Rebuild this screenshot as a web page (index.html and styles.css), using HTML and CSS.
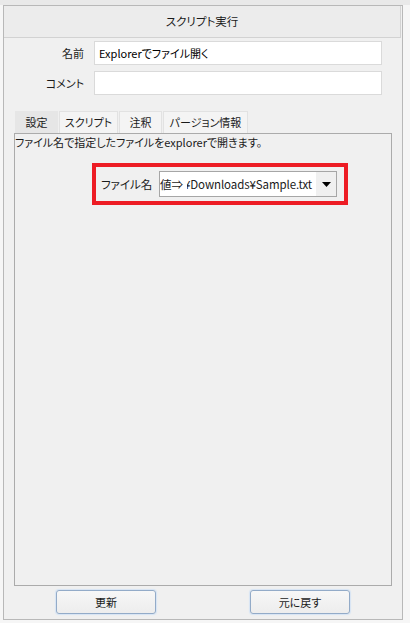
FILE: index.html
```html
<!DOCTYPE html>
<html lang="ja">
<head>
    <meta charset="UTF-8">
    <meta name="viewport" content="width=device-width, initial-scale=1.0">
    <title>スクリプト実行</title>
    <link rel="stylesheet" href="styles.css">
</head>
<body>
    <div class="window">
        <div class="title">スクリプト実行</div>

        <!-- 名前・コメント -->
        <div class="form">
            <label class="form-label">名前</label>
            <input class="form-input" type="text" value="Explorerでファイル開く">
            <label class="form-label">コメント</label>
            <input class="form-input" type="text" value="">
        </div>

        <!-- タブ -->
        <div class="tabs">
            <div class="tab active">設定</div>
            <div class="tab tab-script">スクリプト</div>
            <div class="tab">注釈</div>
            <div class="tab tab-version">パージョン情報</div>
        </div>

        <div class="pane">
            <div class="desc">ファイル名で指定したファイルをexplorerで開きます。</div>

            <div class="param-row">
                <div class="param highlight">
                    <span class="param-label">ファイル名</span>
                    <div class="combo">
                        <div class="combo-text">
                            <span class="prefix">値⇒</span>
                            <span class="path"><span>¥Downloads¥Sample.txt</span><i class="caret"></i></span>
                        </div>
                        <div class="combo-btn">
                            <svg width="9" height="5" viewBox="0 0 9 5"><path d="M0 0H9L4.5 5Z" fill="#000"/></svg>
                        </div>
                    </div>
                </div>
            </div>
        </div>

        <div class="buttons">
            <button class="btn">更新</button>
            <button class="btn">元に戻す</button>
        </div>
    </div>
</body>
</html>
```

FILE: styles.css
```css
* {
    box-sizing: border-box;
    margin: 0;
    padding: 0;
}

html {
    background: #f6f6f6;
}

body {
    font-family: "Noto Sans CJK JP", "Noto Sans", sans-serif;
    font-size: 11px;
    font-feature-settings: "palt";
    color: #1a1a1a;
    height: 623px;
    background: linear-gradient(#e9e9e9 0, #e9e9e9 5px, transparent 5px);
}

.window {
    margin: 5px 0 0 3px;
    width: 400px;
    height: 615px;
    border: 1px solid #b8b8b8;
    background: #f0f0f0;
    display: flex;
    flex-direction: column;
}

.title {
    height: 32px;
    line-height: 30px;
    text-align: center;
    font-size: 11.5px;
    background: #ececec;
    border-right: 1px solid #d2d2d2;
    border-bottom: 1px solid #d2d2d2;
    margin-right: 1px;
}

.form {
    display: grid;
    grid-template-columns: 80px 288px;
    column-gap: 10px;
    row-gap: 6px;
    margin-top: 3px;
}

.form-label {
    text-align: right;
    line-height: 24px;
}

.form-input {
    height: 24px;
    border: 1px solid #dadada;
    background: #fff;
    font: inherit;
    font-feature-settings: "palt";
    padding: 0 4px;
    outline: none;
}

.tabs {
    display: flex;
    margin: 16px 0 0 11px;
    gap: 1px;
    height: 22px;
}

.tab {
    width: 43px;
    height: 22px;
    line-height: 21px;
    text-align: center;
    white-space: nowrap;
    background: #f4f4f4;
    border: 1px solid #e2e2e2;
    border-bottom: none;
}

.tab.active {
    background: #e6e6e6;
    border-color: #e6e6e6;
}

.tab-script {
    width: 59px;
}

.tab-version {
    width: 85px;
}

.pane {
    margin-left: 10px;
    width: 378px;
    height: 453px;
    border: 1px solid #ababab;
    background: #f0f0f0;
}

.desc {
    line-height: 16px;
}

.param-row {
    display: flex;
    padding: 13px 0 0 77px;
}

.param {
    width: 256px;
    display: flex;
    align-items: center;
    padding: 4px 7px 4px 5px;
}

.highlight {
    border: 4px solid #ed1c24;
}

.param-label {
    flex: 1;
    white-space: nowrap;
    font-size: 11.5px;
}

.combo {
    flex: none;
    width: 178px;
    height: 26px;
    border: 1px solid #a6a6a6;
    display: flex;
}

.combo-text {
    flex: 1;
    background: #fff;
    display: flex;
    align-items: center;
    overflow: hidden;
    white-space: nowrap;
    font-size: 11.5px;
}

.prefix {
    padding-right: 4px;
}

.path {
    flex: 1;
    display: flex;
    justify-content: flex-end;
    align-items: center;
    overflow: hidden;
    padding-right: 3px;
    letter-spacing: -0.1px;
}

.caret {
    display: inline-block;
    width: 1px;
    height: 16px;
    background: #000;
    margin-left: 1px;
}

.combo-btn {
    width: 20px;
    display: flex;
    align-items: center;
    justify-content: center;
    background: #f0f0f0;
}

.buttons {
    display: flex;
    gap: 94px;
    padding: 4px 0 0 52px;
}

.btn {
    width: 100px;
    height: 24px;
    font: inherit;
    font-feature-settings: "palt";
    color: #1a1a1a;
    border: 1px solid #93abc8;
    border-radius: 3px;
    background: linear-gradient(#f7f7f7, #ededed);
    box-shadow: 0 0 1px 1px #d6e4f4;
}
```
